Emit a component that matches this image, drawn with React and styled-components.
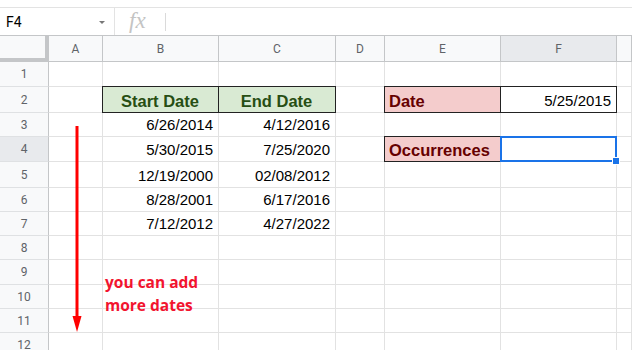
import React from 'react';
import styled, { createGlobalStyle, css } from 'styled-components';

const GlobalStyle = createGlobalStyle`
  html, body {
    margin: 0;
    padding: 0;
    background: #fff;
    overflow: hidden;
  }
  body {
    font-family: "Liberation Sans", Arial, sans-serif;
  }
`;

const Page = styled.div`
  width: 632px;
  height: 350px;
  overflow: hidden;
  position: relative;
  background: #fff;
  padding-top: 7px;
  box-sizing: border-box;
`;

const FormulaBar = styled.div`
  height: 28px;
  border-top: 1px solid #e3e3e3;
  box-sizing: border-box;
  display: flex;
  align-items: center;
`;

const NameBox = styled.div`
  width: 115px;
  height: 100%;
  box-sizing: border-box;
  border-right: 1px solid #e3e3e3;
  display: flex;
  align-items: center;
  justify-content: space-between;
  padding: 0 9px 0 6px;
  font-family: Roboto, "Liberation Sans", sans-serif;
  font-size: 14px;
  color: #000;
`;

const Caret = styled.span`
  width: 0;
  height: 0;
  border-left: 3.5px solid transparent;
  border-right: 3.5px solid transparent;
  border-top: 3.5px solid #777;
  margin-top: 1px;
`;

const Fx = styled.span`
  font-family: "Liberation Serif", "DejaVu Serif", serif;
  font-style: italic;
  font-size: 23px;
  color: #c4c4c4;
  margin-left: 14px;
  width: 36px;
  line-height: 1;
  margin-top: -2px;
`;

const FxDivider = styled.span`
  width: 1px;
  height: 18px;
  background: #dadada;
`;

const Sheet = styled.div`
  display: grid;
  grid-template-columns: 49px 54px 116px 117px 49px 116px 116px 15px;
  grid-template-rows: ${({ $rows }) => $rows.map((h) => `${h}px`).join(' ')};
  position: relative;
`;

const Corner = styled.div`
  background: #f8f9fa;
  border-right: 4px solid #c4c6c8;
  border-bottom: 4px solid #c4c6c8;
  border-top: 1px solid #c4c6c8;
  box-sizing: border-box;
`;

const ColHeader = styled.div`
  background: ${({ $active }) => ($active ? '#e8eaed' : '#f8f9fa')};
  border-top: 1px solid #c4c6c8;
  border-right: 1px solid #c4c6c8;
  border-bottom: 1px solid #c4c6c8;
  box-sizing: border-box;
  display: flex;
  align-items: center;
  justify-content: center;
  font-size: 12px;
  color: #5f6368;
  font-family: Roboto, "Liberation Sans", sans-serif;
`;

const RowHeader = styled.div`
  background: ${({ $active }) => ($active ? '#e8eaed' : '#f8f9fa')};
  border-right: 1px solid #c4c6c8;
  border-bottom: 1px solid #dfe1e3;
  box-sizing: border-box;
  display: flex;
  align-items: center;
  justify-content: center;
  font-size: 12px;
  color: #5f6368;
  font-family: Roboto, "Liberation Sans", sans-serif;
`;

const kinds = {
  green: css`
    background: #d9ead3;
    color: #274e13;
    font-weight: bold;
    font-size: 16.5px;
    justify-content: center;
    padding-bottom: 1px;
  `,
  pink: css`
    background: #f4cccc;
    color: #660000;
    font-weight: bold;
    font-size: 16.5px;
    justify-content: flex-start;
    padding-bottom: 1px;
  `,
  value: css`
    justify-content: flex-end;
  `,
};

const Cell = styled.div`
  position: relative;
  border-right: 1px solid #e2e2e2;
  border-bottom: 1px solid #e2e2e2;
  box-sizing: border-box;
  display: flex;
  align-items: flex-end;
  padding: 0 5px 3px 4px;
  font-size: 15px;
  color: #000;
  white-space: nowrap;
  ${({ $kind }) => kinds[$kind]}

  ${({ $boxed }) =>
    $boxed &&
    css`
      &::after {
        content: '';
        position: absolute;
        top: -1px;
        left: -1px;
        right: -1px;
        bottom: -1px;
        border: 1px solid #222;
        pointer-events: none;
      }
    `}

  ${({ $selected }) =>
    $selected &&
    css`
      &::after {
        content: '';
        position: absolute;
        top: -1px;
        left: -1px;
        right: -1px;
        bottom: -1px;
        border: 2px solid #1a73e8;
        pointer-events: none;
      }
      &::before {
        content: '';
        position: absolute;
        right: -4px;
        bottom: -4px;
        width: 6px;
        height: 6px;
        background: #1a73e8;
        border: 1px solid #fff;
        z-index: 2;
      }
    `}
`;

const Arrow = styled.svg`
  position: absolute;
  left: 70px;
  top: 91px;
  width: 14px;
  height: 207px;
`;

const Note = styled.div`
  position: absolute;
  left: 105px;
  top: 236px;
  font-family: "Open Sans", "Noto Sans", sans-serif;
  font-weight: bold;
  font-size: 15.5px;
  line-height: 23px;
  color: #f2142f;
`;

const columns = ['A', 'B', 'C', 'D', 'E', 'F', ''];
const rowHeights = [27, 25, 26, 24, 25, 26, 24, 24, 24, 25, 24, 24, 24];

const data = {
  B2: { text: 'Start Date', kind: 'green', boxed: true },
  C2: { text: 'End Date', kind: 'green', boxed: true },
  E2: { text: 'Date', kind: 'pink', boxed: true },
  F2: { text: '5/25/2015', kind: 'value', boxed: true },
  E4: { text: 'Occurrences', kind: 'pink', boxed: true },
  F4: { text: '', kind: 'value', selected: true },
  B3: { text: '6/26/2014', kind: 'value' },
  C3: { text: '4/12/2016', kind: 'value' },
  B4: { text: '5/30/2015', kind: 'value' },
  C4: { text: '7/25/2020', kind: 'value' },
  B5: { text: '12/19/2000', kind: 'value' },
  C5: { text: '02/08/2012', kind: 'value' },
  B6: { text: '8/28/2001', kind: 'value' },
  C6: { text: '6/17/2016', kind: 'value' },
  B7: { text: '7/12/2012', kind: 'value' },
  C7: { text: '4/27/2022', kind: 'value' },
};

function App() {
  const rows = Array.from({ length: 12 }, (_, i) => i + 1);

  return (
    <Page>
      <GlobalStyle />
      <FormulaBar>
        <NameBox>
          F4
          <Caret />
        </NameBox>
        <Fx>fx</Fx>
        <FxDivider />
      </FormulaBar>
      <Sheet $rows={rowHeights}>
        <Corner />
        {columns.map((c, i) => (
          <ColHeader key={'h' + i} $active={c === 'F'}>
            {c}
          </ColHeader>
        ))}
        {rows.map((r) => (
          <React.Fragment key={r}>
            <RowHeader $active={r === 4}>{r}</RowHeader>
            {columns.map((c, i) => {
              const cell = data[c + r] || {};
              return (
                <Cell
                  key={r + '-' + i}
                  $kind={cell.kind}
                  $boxed={cell.boxed}
                  $selected={cell.selected}
                >
                  {cell.text}
                </Cell>
              );
            })}
          </React.Fragment>
        ))}
        <Arrow viewBox="0 0 14 207">
          <line x1="7" y1="0" x2="7" y2="192" stroke="#ff0000" strokeWidth="3" />
          <polygon points="2.5,190 11.5,190 7,206" fill="#ff0000" />
        </Arrow>
        <Note>
          you can add
          <br />
          more dates
        </Note>
      </Sheet>
    </Page>
  );
}

export default App;
